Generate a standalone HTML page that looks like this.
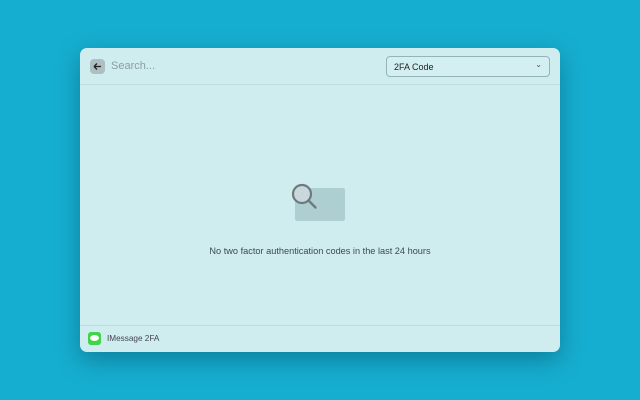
<!DOCTYPE html>
<html><head><style>
body{margin:0;width:640px;height:400px;background:#16aed0;font-family:"Liberation Sans",sans-serif;overflow:hidden;position:relative}
.win{position:absolute;left:80px;top:48px;width:480px;height:304px;background:#cfedef;border-radius:7px;box-shadow:0 8px 24px rgba(0,40,60,.35);overflow:hidden}
.top{height:36px;border-bottom:1px solid #bcdde0;position:relative}
.back{position:absolute;left:10px;top:11px;width:15px;height:15px;border-radius:4px;background:#aebec1}
.search{position:absolute;left:31px;top:12px;font-size:11px;color:#8a9ea2}
.sel{position:absolute;left:306px;top:8px;width:162px;height:19px;border:1px solid #96b4b8;border-radius:4px;background:#d3eff1;font-size:9px;color:#222}
.sel span{position:absolute;left:7px;top:5px}
.sel i{position:absolute;right:7px;top:3px;font-style:normal;font-size:8px;color:#555}
.msg{position:absolute;left:0;width:480px;top:198px;text-align:center;font-size:9.2px;color:#3d4a4c}
.bot{position:absolute;bottom:0;left:0;right:0;height:26px;border-top:1px solid #bcdde0}
.ic{position:absolute;left:8px;top:6px;width:13px;height:13px;border-radius:3px;background:#3fd44a}
.ic:after{content:"";position:absolute;left:2px;top:3px;width:9px;height:6px;border-radius:50%;background:#fff}
.bt{position:absolute;left:27px;top:8px;font-size:8.2px;color:#445}
</style></head><body>
<div class="win">
<div class="top"><div class="back"><svg width="15" height="15"><path d="M4 7.5h7M4 7.5l3-3M4 7.5l3 3" stroke="#222" stroke-width="1.3" fill="none"/></svg></div>
<div class="search">Search...</div>
<div class="sel"><span>2FA Code</span><i>⌄</i></div></div>
<svg style="position:absolute;left:205px;top:128px" width="70" height="50">
<rect x="10" y="12" width="50" height="33" rx="2" fill="#aecfd1"/>
<circle cx="17" cy="18" r="9" fill="#c8d8dc" stroke="#6f7a7c" stroke-width="2.2"/>
<path d="M23.5 24.5l7 7" stroke="#6f7a7c" stroke-width="2.4" stroke-linecap="round"/>
</svg>
<div class="msg">No two factor authentication codes in the last 24 hours</div>
<div class="bot"><div class="ic"></div><div class="bt">IMessage 2FA</div></div>
</div>
</body></html>
